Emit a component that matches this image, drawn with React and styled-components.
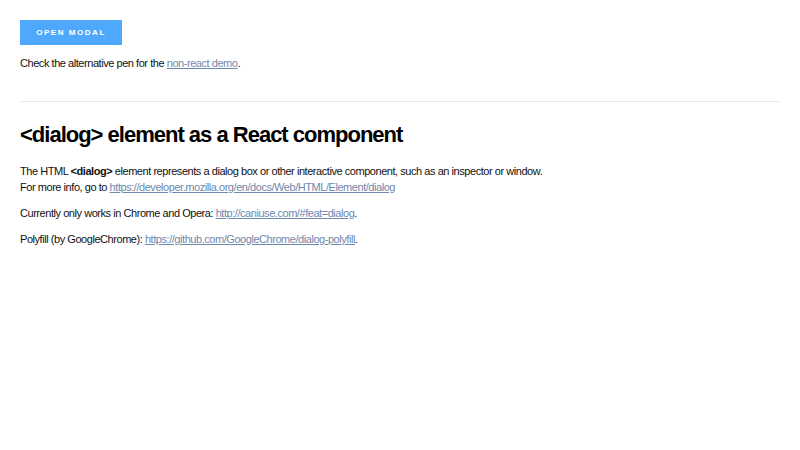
import React from "react";
import styled, { createGlobalStyle } from "styled-components";

const Global = createGlobalStyle`
  html, body { margin: 0; padding: 0; background: #fff; }
  body { font-family: "Liberation Sans", Arial, sans-serif; color: #111; font-size: 11px; }
`;

const Page = styled.div`
  padding: 20px;
`;

const Button = styled.button`
  display: block;
  background: #4ea8fb;
  color: #fff;
  border: none;
  height: 25px;
  width: 102px;
  padding: 0;
  font-family: "Liberation Sans", Arial, sans-serif;
  font-size: 8px;
  font-weight: 700;
  letter-spacing: 1.55px;
  text-transform: uppercase;
  cursor: pointer;
`;

const P = styled.p`
  margin: ${(p) => p.$m || "10px 0 0"};
  font-size: 11px;
  letter-spacing: -0.45px;
  line-height: 16px;
`;

const Link = styled.a`
  color: #6f88ad;
  text-decoration: underline;
`;

const Rule = styled.hr`
  border: none;
  border-top: 1px solid #e8e8e8;
  margin: 30px 0 0;
`;

const Title = styled.h1`
  margin: 19px 0 0;
  font-size: 22px;
  letter-spacing: -1px;
  line-height: 28px;
  font-weight: 700;
  color: #000;
`;

export default function App() {
  return (
    <Page>
      <Global />
      <Button>Open modal</Button>
      <P>
        Check the alternative pen for the <Link href="#">non-react demo</Link>.
      </P>
      <Rule />
      <Title>&lt;dialog&gt; element as a React component</Title>
      <P $m="14px 0 0">
        The HTML <b>&lt;dialog&gt;</b> element represents a dialog box or other interactive component, such as an inspector or window.
        <br />
        For more info, go to{" "}
        <Link href="#">https://developer.mozilla.org/en/docs/Web/HTML/Element/dialog</Link>
      </P>
      <P>
        Currently only works in Chrome and Opera: <Link href="#">http://caniuse.com/#feat=dialog</Link>.
      </P>
      <P>
        Polyfill (by GoogleChrome): <Link href="#">https://github.com/GoogleChrome/dialog-polyfill</Link>.
      </P>
    </Page>
  );
}
